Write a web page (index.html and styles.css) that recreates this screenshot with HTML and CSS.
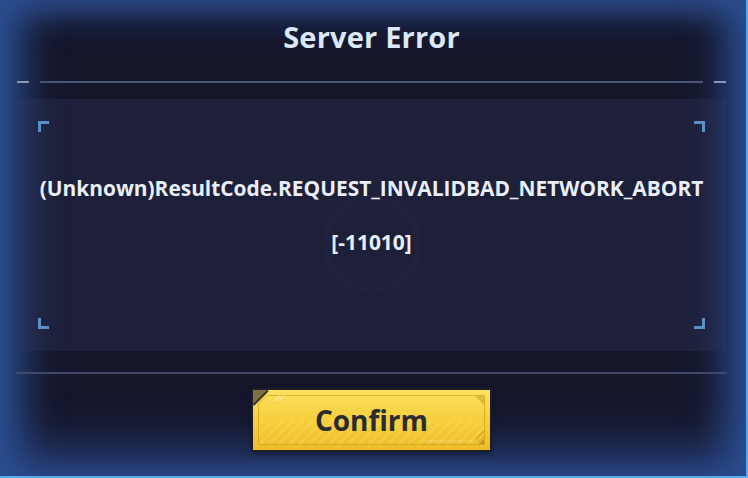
FILE: index.html
```html
<!DOCTYPE html>
<html>
<head>
<meta charset="utf-8">
<link rel="stylesheet" href="styles.css">
</head>
<body>
<div class="screen">
  <h1 class="title">Server Error</h1>
  <div class="divider top-divider">
    <span class="dash"></span>
    <span class="line"></span>
    <span class="dash"></span>
  </div>
  <div class="panel">
    <span class="corner tl"></span>
    <span class="corner tr"></span>
    <span class="corner bl"></span>
    <span class="corner br"></span>
    <span class="ring"></span>
    <p class="msg">(Unknown)ResultCode.REQUEST_INVALIDBAD_NETWORK_ABORT</p>
    <p class="msg code">[-11010]</p>
  </div>
  <div class="bottom-line"></div>
  <div class="actions">
    <button class="confirm">
      <svg class="deco" width="237" height="60" viewBox="0 0 237 60">
        <defs>
          <pattern id="stripes" width="7" height="7" patternUnits="userSpaceOnUse" patternTransform="rotate(45)">
            <rect width="2" height="7" fill="rgba(255,255,255,0.13)"/>
          </pattern>
        </defs>
        <rect x="6" y="30" width="225" height="25" fill="url(#stripes)"/>
        <polygon points="0,0 15,0 0,15" fill="#7e7244"/>
        <line x1="15" y1="0.5" x2="0.5" y2="15" stroke="#3a3424" stroke-width="2"/>
        <path d="M14 5.5 H231.5 V54.5 H5.5 V14 Z" fill="none" stroke="rgba(196,146,18,0.55)" stroke-width="1"/>
        <line x1="21" y1="11" x2="27" y2="5" stroke="rgba(255,255,255,0.35)" stroke-width="1.5"/>
        <line x1="25" y1="11" x2="31" y2="5" stroke="rgba(255,255,255,0.35)" stroke-width="1.5"/>
        <polygon points="222,6 231,6 231,15" fill="rgba(196,146,18,0.45)"/>
        <line x1="223" y1="49" x2="231" y2="41" stroke="rgba(196,146,18,0.6)" stroke-width="1.5"/>
        <line x1="225" y1="53" x2="231" y2="47" stroke="rgba(196,146,18,0.6)" stroke-width="1.5"/>
        <polygon points="226,54 231,54 231,49" fill="rgba(176,126,10,0.7)"/>
        <line x1="170" y1="51" x2="220" y2="51" stroke="rgba(255,255,255,0.25)" stroke-width="1"/>
      </svg>
      <span class="label">Confirm</span>
    </button>
  </div>
</div>
</body>
</html>
```

FILE: styles.css
```css
* { box-sizing: border-box; }
html, body { margin: 0; padding: 0; background: #15162a; }
body { width: 748px; height: 478px; overflow: hidden; font-family: "Open Sans", "Noto Sans", sans-serif; }

.screen {
  position: relative;
  width: 748px;
  height: 478px;
  background: #15162a;
  box-shadow:
    inset -2px 0 0 #55abec,
    inset 0 -2px 0 #55abec,
    inset 40px 0 40px -18px #2b4f92,
    inset -40px 0 40px -18px #2b4f92,
    inset 0 30px 30px -14px #2a4680,
    inset 0 -40px 50px -16px #2b4a8c;
  padding: 0 22px 0 17px;
  display: flex;
  flex-direction: column;
}

.title {
  margin: 0;
  padding-top: 17px;
  height: 66px;
  text-align: center;
  font-size: 29px;
  font-weight: 700;
  line-height: 40px;
  color: #dce8f6;
  letter-spacing: 0.2px;
}

.divider {
  display: flex;
  align-items: center;
  gap: 11px;
  height: 34px;
  margin-top: -1px;
}
.divider .dash { width: 12px; height: 2px; background: #8a98b8; }
.divider .line { flex: 1; height: 2px; background: #4b5575; }

.panel {
  position: relative;
  height: 252px;
  background: rgba(52, 56, 96, 0.3);
  display: flex;
  flex-direction: column;
  align-items: center;
  padding-top: 74px;
}
.corner { position: absolute; width: 11px; height: 11px; border-color: #5c8fc4; border-style: solid; border-width: 0; }
.corner.tl { left: 21px; top: 22px; border-left-width: 3px; border-top-width: 3px; }
.corner.tr { right: 21px; top: 22px; border-right-width: 3px; border-top-width: 3px; }
.corner.bl { left: 21px; bottom: 22px; border-left-width: 3px; border-bottom-width: 3px; }
.corner.br { right: 21px; bottom: 22px; border-right-width: 3px; border-bottom-width: 3px; }
.ring {
  position: absolute;
  left: 305px; top: 95px;
  width: 100px; height: 100px;
  border-radius: 50%;
  border: 8px solid rgba(255,255,255,0.012);
}

.msg {
  position: relative;
  margin: 0;
  font-size: 20.9px;
  font-weight: 700;
  line-height: 30px;
  color: #e9eff9;
  white-space: nowrap;
}
.msg.code { margin-top: 24px; }

.bottom-line {
  margin-top: 21px;
  height: 2px;
  background: #40496a;
  margin-right: -1px;
  margin-left: -1px;
}

.actions {
  display: flex;
  justify-content: center;
  padding-top: 16px;
}
.confirm {
  position: relative;
  width: 237px;
  height: 60px;
  border: 0;
  padding: 0;
  background: linear-gradient(180deg, #fbe060 0%, #f6d03c 50%, #eebd2a 100%);
  box-shadow: 0 0 0 2px #1b1c2c, 0 3px 6px rgba(0,0,0,0.5);
  font-family: "Open Sans", "Noto Sans", sans-serif;
  cursor: pointer;
}
.confirm .deco {
  position: absolute;
  left: 0; top: 0;
}
.confirm .label {
  position: relative;
  font-size: 28px;
  font-weight: 700;
  color: #2b2c33;
  line-height: 60px;
}
```
